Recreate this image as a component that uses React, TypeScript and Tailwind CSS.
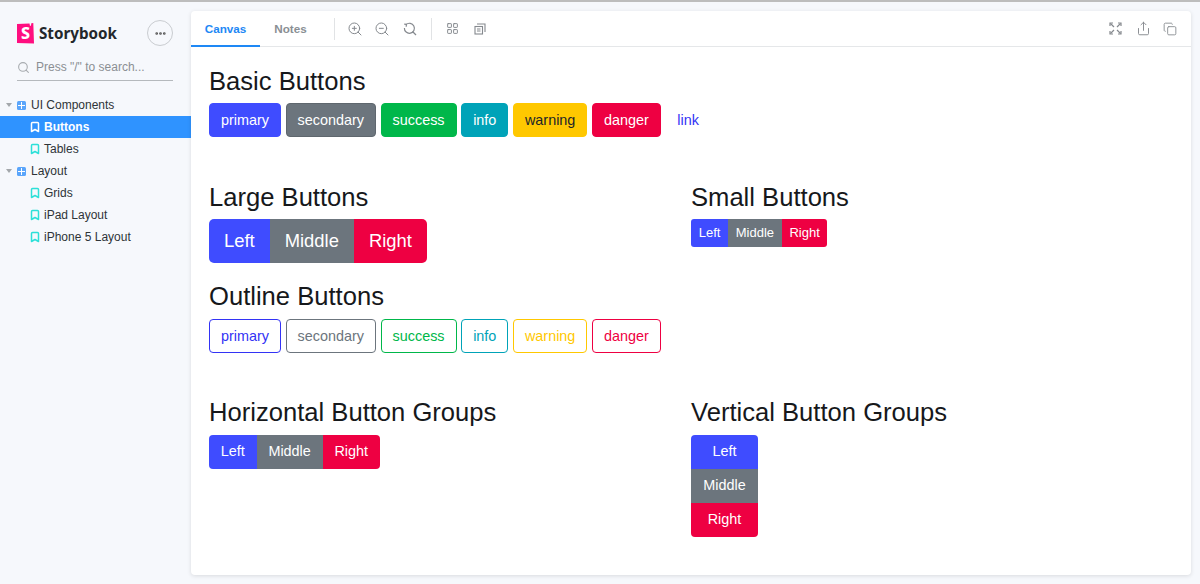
import { ZoomIn, ZoomOut, Bookmark, Ellipsis, Search, LayoutGrid, Share, Copy } from "lucide-react";

const sans = "font-['Liberation_Sans',Arial,sans-serif]";

const solid: Record<string, string> = {
  primary: "bg-[#3f4cff] border-[#3f4cff] text-white",
  secondary: "bg-[#6c757d] border-[#5f676e] text-white",
  success: "bg-[#00b74a] border-[#00b74a] text-white",
  info: "bg-[#00a3b8] border-[#00a3b8] text-white",
  warning: "bg-[#ffc800] border-[#ffc800] text-[#212529]",
  danger: "bg-[#ee0042] border-[#ee0042] text-white",
};

const outline: Record<string, string> = {
  primary: "border-[#3333f5] text-[#3333f5]",
  secondary: "border-[#6c757d] text-[#6c757d]",
  success: "border-[#00b74a] text-[#00b74a]",
  info: "border-[#00a3b8] text-[#00a3b8]",
  warning: "border-[#ffc800] text-[#ffc800]",
  danger: "border-[#ee0042] text-[#ee0042]",
};

const names = ["primary", "secondary", "success", "info", "warning", "danger"];

function Btn({ name, cls }: { name: string; cls: string }) {
  return <button className={`h-[34px] px-[11px] mr-[4.6px] pb-px border rounded text-[14.4px] leading-6 ${cls}`}>{name}</button>;
}

function Heading({ children, className = "" }: { children: string; className?: string }) {
  return <h3 className={`text-[25.6px] leading-[30px] text-[#16181b] ${className}`}>{children}</h3>;
}

function HGroup({ size }: { size: "lg" | "md" | "sm" }) {
  const s = {
    lg: "h-11 px-[15px] text-[18.4px]",
    md: "h-[34px] px-[11.8px] pb-px text-[14.4px]",
    sm: "h-7 px-[7.7px] pb-px text-[13px]",
  }[size];
  const l = { lg: "rounded-l-[5px]", md: "rounded-l", sm: "rounded-l-[3px]" }[size];
  const r = { lg: "rounded-r-[5px]", md: "rounded-r", sm: "rounded-r-[3px]" }[size];
  return (
    <div className="flex">
      <button className={`${s} ${l} bg-[#3f4cff] text-white`}>Left</button>
      <button className={`${s} bg-[#6c757d] text-white`}>Middle</button>
      <button className={`${s} ${r} bg-[#ee0042] text-white`}>Right</button>
    </div>
  );
}

function GroupIcon() {
  return (
    <svg width="9" height="9" viewBox="0 0 9 9" className="shrink-0 block">
      <rect width="9" height="9" rx="1.5" fill="#5aa5fb" />
      <path d="M4.500 1v7M1 4.500h7" stroke="#fff" strokeWidth="1" />
    </svg>
  );
}

function Caret() {
  return (
    <svg width="6" height="4" viewBox="0 0 6 4" className="shrink-0">
      <path d="M0 0h6L3 4z" fill="#a3a7ab" />
    </svg>
  );
}

function Folder({ label }: { label: string }) {
  return (
    <div className="h-[22px] pl-[6px] flex items-center text-[#2e3438] text-xs">
      <Caret />
      <span className="ml-[5px]"><GroupIcon /></span>
      <span className="ml-[5px] pb-px">{label}</span>
    </div>
  );
}

function Story({ label, active = false }: { label: string; active?: boolean }) {
  return (
    <div
      className={`h-[22px] pl-[28.5px] flex items-center text-xs ${
        active ? "bg-[#2f93ff] text-white font-bold" : "text-[#2e3438]"
      }`}
    >
      <Bookmark size={12} strokeWidth={3} className={active ? "text-white" : "text-[#2ce0d8]"} />
      <span className="ml-[3.5px] pb-px">{label}</span>
    </div>
  );
}

function ZoomReset() {
  return (
    <svg width="14" height="14" viewBox="0 0 14 14" fill="none" stroke="currentColor" strokeWidth="1.2">
      <path d="M3 2.600A5 5 0 1 1 1.400 6" />
      <path d="M1.200 2.200 3.400 2.400 3.200 4.800" />
      <path d="M9.500 9.500 13 13" />
    </svg>
  );
}

function OutlineIcon() {
  return (
    <svg width="12" height="12" viewBox="0 0 12 12" fill="none" stroke="currentColor" strokeWidth="1.1">
      <rect x="1" y="3.500" width="7.500" height="7.500" />
      <path d="M3 1h8v8" />
      <path d="M3 6h3.500M3 8h3.500" />
    </svg>
  );
}

function FullIcon() {
  return (
    <svg width="13" height="13" viewBox="0 0 13 13" fill="none" stroke="currentColor" strokeWidth="1.2">
      <path d="M1 4V1h3M9 1h3v3M1 9v3h3M12 9v3H9" />
      <path d="M1.500 1.500 5 5M11.500 1.500 8 5M1.500 11.500 5 8M11.500 11.500 8 8" />
    </svg>
  );
}

export default function App() {
  return (
    <div className={`w-[1200px] h-[584px] overflow-hidden bg-[#f6f8fc] flex flex-col ${sans}`}>
      <div className="h-[2px] bg-[#bdbdbd] shrink-0" />
      <div className="flex flex-1 min-h-0">
        {/* sidebar */}
        <aside className="w-[191px] shrink-0 pt-[17px]">
          <div className="flex items-center pl-[17px] pr-[18px] h-7">
            <span className="relative w-[17px] h-[21px] shrink-0">
              <svg width="17" height="21" viewBox="0 0 17 21" className="block">
                <path d="M0 1 12.500.6 13 3l1-.6L14.300.3 16.300 0 17 20.500 0 20z" fill="#ff0e7f" />
              </svg>
              <span className="absolute inset-0 flex items-center justify-center text-white font-extrabold text-[16px] font-['Noto_Sans',sans-serif]">S</span>
            </span>
            <span className="ml-[5px] text-[15.2px] font-bold text-[#23272b] font-['Noto_Sans',sans-serif]">Storybook</span>
            <span className="ml-auto w-[26px] h-[26px] rounded-full border border-[#c9ccd0] flex items-center justify-center text-[#555]">
              <Ellipsis size={13} strokeWidth={3} />
            </span>
          </div>
          <div className="mx-[17px] mt-[8px] h-[26px] flex items-center border-b border-[#b5b9bd] w-[156px] text-xs text-[#8b8f93]">
            <Search size={13} className="text-[#a8acb0]" />
            <span className="ml-[6px] pb-px">Press "/" to search...</span>
          </div>
          <div className="mt-[13px]">
            <Folder label="UI Components" />
            <Story label="Buttons" active />
            <Story label="Tables" />
            <Folder label="Layout" />
            <Story label="Grids" />
            <Story label="iPad Layout" />
            <Story label="iPhone 5 Layout" />
          </div>
        </aside>

        {/* canvas panel */}
        <main className="mt-[9px] mb-[9px] w-[1000px] bg-white rounded shadow-[0_1px_4px_rgba(0,0,0,0.12)] flex flex-col">
          <div className="h-9 shrink-0 flex items-center border-b border-[#e5e7e9] text-[#85898e]">
            <div className="h-full w-[69px] border-b-2 border-[#1e88f5] -mb-px pt-px flex items-center justify-center text-[11.7px] font-bold text-[#1e88f5]">
              Canvas
            </div>
            <div className="w-[61px] text-center text-[11.7px] font-bold text-[#8a8f94]">Notes</div>
            <div className="ml-[13px] w-px h-[22px] bg-[#e1e3e5]" />
            <ZoomIn size={16} strokeWidth={1.5} className="ml-[12px]" />
            <ZoomOut size={16} strokeWidth={1.5} className="ml-[11px]" />
            <span className="ml-[13px]"><ZoomReset /></span>
            <div className="ml-[14px] w-px h-[22px] bg-[#e1e3e5]" />
            <LayoutGrid size={13} strokeWidth={1.8} className="ml-[13.5px]" />
            <span className="ml-[15.5px]"><OutlineIcon /></span>
            <div className="ml-auto mr-[14px] flex items-center">
              <FullIcon />
              <Share size={15} strokeWidth={1.5} className="ml-[14px]" />
              <Copy size={14} strokeWidth={1.5} className="ml-[12.5px]" />
            </div>
          </div>

          <div className="px-[18px] pt-[19px] flex-1 min-h-0">
            <Heading className="mb-[7px]">Basic Buttons</Heading>
            <div className="flex">
              {names.map((n) => (
                <Btn key={n} name={n} cls={solid[n]} />
              ))}
              <span className="h-[34px] px-3 text-[14.4px] leading-[34px] text-[#3333f5]">link</span>
            </div>

            <div className="grid grid-cols-[482px_1fr] mt-[45px]">
              <div>
                <Heading className="mb-[7px]">Large Buttons</Heading>
                <HGroup size="lg" />
                <Heading className="mt-[18px] mb-2">Outline Buttons</Heading>
                <div className="flex">
                  {names.map((n) => (
                    <Btn key={n} name={n} cls={outline[n]} />
                  ))}
                </div>
              </div>
              <div>
                <Heading className="mb-[7px]">Small Buttons</Heading>
                <HGroup size="sm" />
              </div>
            </div>

            <div className="grid grid-cols-[482px_1fr] mt-[44px]">
              <div>
                <Heading className="mb-2">Horizontal Button Groups</Heading>
                <HGroup size="md" />
              </div>
              <div>
                <Heading className="mb-2">Vertical Button Groups</Heading>
                <div className="flex flex-col w-[67px] text-[14.4px] text-white">
                  <button className="h-[34px] pb-px bg-[#3f4cff] rounded-t">Left</button>
                  <button className="h-[34px] pb-px bg-[#6c757d]">Middle</button>
                  <button className="h-[34px] pb-px bg-[#ee0042] rounded-b">Right</button>
                </div>
              </div>
            </div>
          </div>
        </main>
      </div>
    </div>
  );
}
